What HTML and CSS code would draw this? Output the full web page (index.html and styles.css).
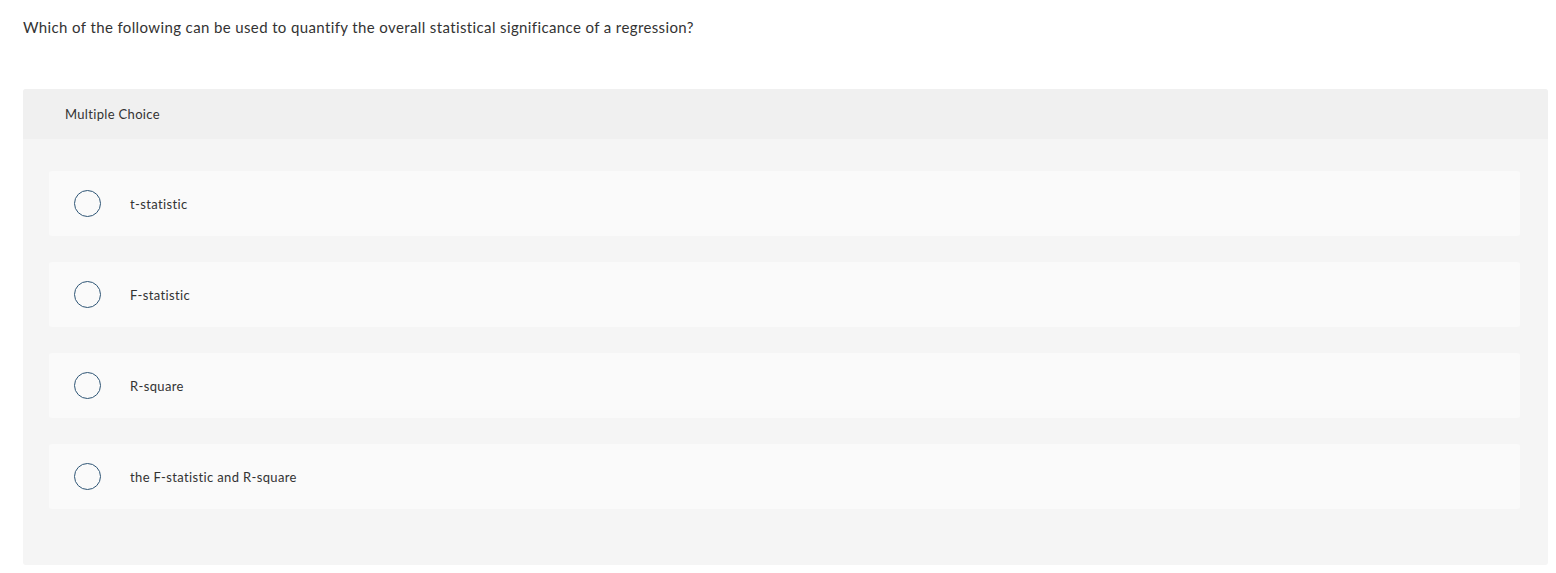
FILE: index.html
```html
<!DOCTYPE html>
<html>
<head>
<meta charset="utf-8">
<link rel="stylesheet" href="styles.css">
</head>
<body>
<div class="page">
  <p class="question">Which of the following can be used to quantify the overall statistical significance of a regression?</p>
  <div class="panel">
    <div class="panel-header">Multiple Choice</div>
    <div class="panel-body">
      <div class="option"><span class="radio"></span><span class="label">t-statistic</span></div>
      <div class="option"><span class="radio"></span><span class="label">F-statistic</span></div>
      <div class="option"><span class="radio"></span><span class="label">R-square</span></div>
      <div class="option"><span class="radio"></span><span class="label">the F-statistic and R-square</span></div>
    </div>
  </div>
</div>
</body>
</html>
```
FILE: styles.css
```css
html, body {
  margin: 0;
  padding: 0;
  background: #ffffff;
}
body {
  font-family: "Lato", "Liberation Sans", sans-serif;
  color: #333333;
}
.page {
  padding: 0 8px 0 23px;
}
.question {
  margin: 0;
  padding-top: 17px;
  font-size: 15px;
  line-height: 20px;
  letter-spacing: 0.38px;
  color: #333333;
}
.panel {
  margin-top: 52px;
  width: 1525px;
  border-radius: 3px;
  overflow: hidden;
  background: #f5f5f5;
}
.panel-header {
  height: 50px;
  background: #f0f0f0;
  display: flex;
  align-items: center;
  padding-left: 42px;
  font-size: 13px;
  letter-spacing: 0.33px;
  color: #333333;
}
.panel-body {
  padding: 32px 28px 56px 26px;
  display: flex;
  flex-direction: column;
  gap: 26px;
}
.option {
  height: 65px;
  background: #fafafa;
  border-radius: 3px;
  display: flex;
  align-items: center;
  padding-left: 25px;
}
.radio {
  width: 25px;
  height: 25px;
  border: 1.5px solid #2e5575;
  border-radius: 50%;
  flex: none;
}
.label {
  margin-left: 29px;
  font-size: 13px;
  letter-spacing: 0.36px;
  color: #333333;
}
```
